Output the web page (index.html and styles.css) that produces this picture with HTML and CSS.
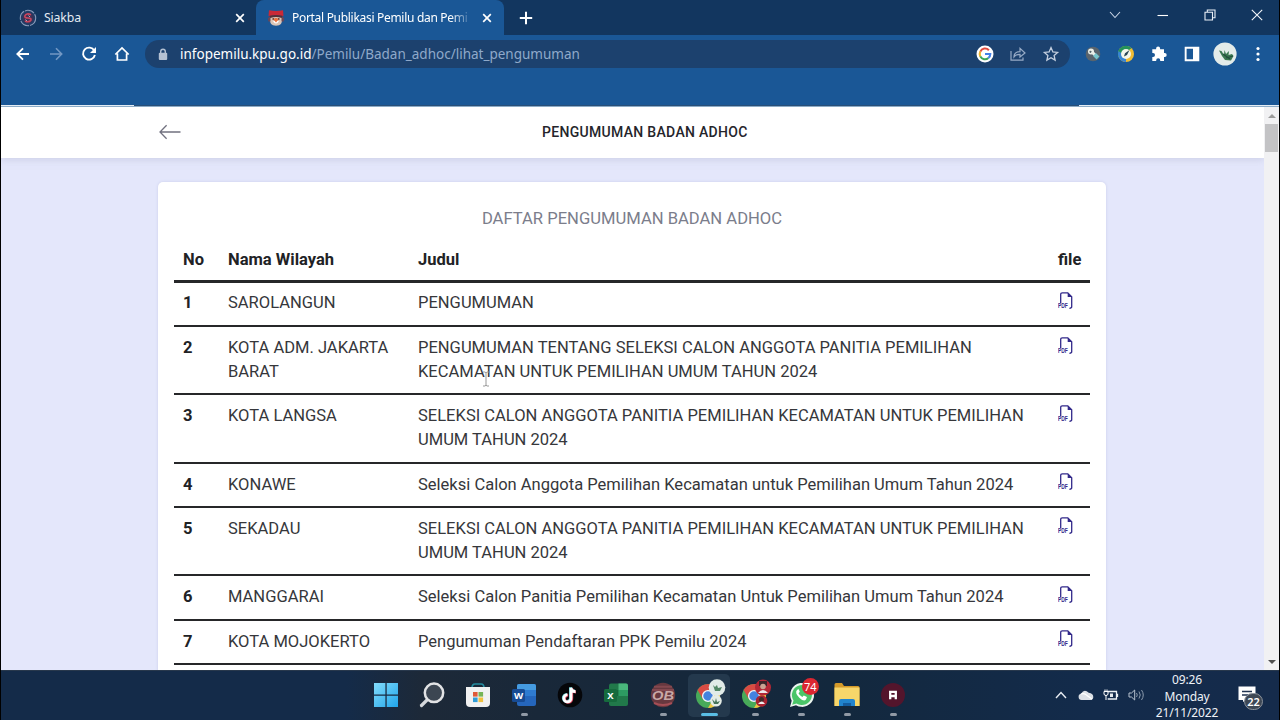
FILE: index.html
```html
<!DOCTYPE html>
<html lang="id">
<head>
<meta charset="utf-8">
<title>Portal Publikasi Pemilu dan Pemilihan</title>
<link rel="stylesheet" href="styles.css">
</head>
<body>
<svg width="0" height="0" class="defs">
  <symbol id="pdf" viewBox="0 0 15 18"><path d="M2.7 11V2.5Q2.7.9 4.3.9H9.8L13.7 4.8V14.8Q13.7 16.2 11.4 16.3" fill="none" stroke="#32298a" stroke-width="1.3"/><path d="M9.7.8V4.9H13.9Z" fill="#32298a"/><text x="0" y="16.4" textLength="9.8" lengthAdjust="spacingAndGlyphs">PDF</text></symbol>
  <symbol id="x" viewBox="0 0 10 10"><path d="M1.2 1.2 8.8 8.8M8.8 1.2 1.2 8.8" fill="none" stroke="#fff" stroke-width="1.7"/></symbol>
</svg>
<div class="screen">
  <header class="tabs">
    <div class="tab first">
      <svg class="fav" viewBox="0 0 18 18"><circle cx="9" cy="9" r="7.7" fill="#233b65" stroke="#8799b8" stroke-width="1.1" stroke-dasharray="10 1"/><circle cx="9" cy="9" r="5.2" fill="#3f3155"/><path d="M12 5.7Q7.5 3.5 5.8 7Q5.5 9 9 9T12 11Q10 14 6 12" fill="none" stroke="#c8465f" stroke-width="1.6"/><path d="M6.5 10.5 8 12M9.5 6.5 11 8" stroke="#9faac4" stroke-width="1"/></svg>
      <span class="title">Siakba</span><svg class="close"><use href="#x"/></svg>
    </div>
    <div class="tab active">
      <svg class="fav" viewBox="0 0 18 18"><path d="M2.5 8Q2 16.8 9 16.8T15.5 8Z" fill="#d9c5b8"/><path d="M.8 9.2 3.5 7V12.5H1.4ZM17.2 9.2 14.5 7V12.5H16.6Z" fill="#6c4655"/><path d="M2 1.3Q9 2.5 16 1.3L16.5 7.2Q9 5.6 1.5 7.2Z" fill="#ca2937"/><path d="M2.5 6.8Q9 5 15.5 6.8L14.7 9Q9 7 3.3 9Z" fill="#553039"/><circle cx="6.3" cy="10" r="1" fill="#6f3e32"/><circle cx="11.7" cy="10" r="1" fill="#6f3e32"/><path d="M6 12Q9 17 12 12Z" fill="#fff"/><path d="M6.5 10.5 9 13.5 11.5 10.5 10 9H8Z" fill="#ed713d"/></svg>
      <span class="title">Portal Publikasi Pemilu dan Pemi</span><svg class="close"><use href="#x"/></svg>
    </div>
    <svg class="plus" viewBox="0 0 14 14"><path d="M7 .8V13.2M.8 7H13.2" stroke="#fff" stroke-width="2"/></svg>
    <div class="window">
      <svg width="12" height="8" viewBox="0 0 12 8"><path d="M1 1 6 6.5 11 1" fill="none" stroke="#c9d6e7" stroke-width="1.1"/></svg>
      <svg width="12" height="12" viewBox="0 0 12 12"><path d="M.5 6.5H11" stroke="#fff" stroke-width="1.1"/></svg>
      <svg width="12" height="12" viewBox="0 0 12 12"><path d="M1 3.2H8.5V11H1ZM3.3 3V1H11V8.8H8.8" fill="none" stroke="#e8eef6" stroke-width="1.1"/></svg>
      <svg width="12" height="12" viewBox="0 0 12 12"><path d="M.8.8 11.2 11.2M11.2.8.8 11.2" stroke="#f4f7fb" stroke-width="1.1"/></svg>
    </div>
  </header>
  <div class="toolbar">
    <div class="nav">
      <svg width="16" height="16" viewBox="0 0 16 16"><path d="M14 8H2.5M8 2.3 2.3 8 8 13.7" fill="none" stroke="#fff" stroke-width="1.8"/></svg>
      <svg width="16" height="16" viewBox="0 0 16 16"><path d="M2 8H13.5M8 2.3 13.7 8 8 13.7" fill="none" stroke="#7398c4" stroke-width="1.6"/></svg>
      <svg width="16" height="16" viewBox="0 0 16 16"><path d="M13.3 4.7A6 6 0 1 0 13.9 9" fill="none" stroke="#fff" stroke-width="1.9"/><path d="M15 1V7H9Z" fill="#fff"/></svg>
      <svg width="16" height="16" viewBox="0 0 16 16"><path d="M1.3 8.5 8 2 14.7 8.5M3.4 7.5V14H12.6V7.5" fill="none" stroke="#fff" stroke-width="1.7"/></svg>
    </div>
    <div class="address">
      <svg class="lock" viewBox="0 0 10 13"><rect x=".8" y="4.8" width="8.4" height="7.2" rx="1" fill="#b4c1d3"/><path d="M2.7 5V3.5a2.3 2.3 0 0 1 4.6 0V5" fill="none" stroke="#b4c1d3" stroke-width="1.4"/></svg>
      <span class="url"><b>infopemilu.kpu.go.id</b>/Pemilu/Badan_adhoc/lihat_pengumuman</span>
      <svg width="18" height="18" viewBox="0 0 18 18"><circle cx="9" cy="9" r="8.5" fill="#fff"/><g fill="none" stroke-width="2.1"><path d="M4.3 6.6A5.2 5.2 0 0 1 12.9 5.2" stroke="#e34c3e"/><path d="M4.3 6.6A5.2 5.2 0 0 0 4.3 11.4" stroke="#f0b32c"/><path d="M4.3 11.4A5.2 5.2 0 0 0 12.4 13" stroke="#3da657"/><path d="M12.4 13Q14.3 11.3 14.3 9H9" stroke="#4481e8"/></g></svg>
      <svg width="18" height="18" viewBox="0 0 18 18"><path d="M2 6V15.2H14V12.5M5 12Q5 6.8 11 6.6V3.3L16 8 11 12V9.3Q7 9.2 5 12Z" fill="none" stroke="#97abc6" stroke-width="1.2"/></svg>
      <svg width="18" height="18" viewBox="0 0 18 18"><path d="M9 2.6 10.9 6.9 15.6 7.4 12.1 10.5 13.1 15.1 9 12.7 4.9 15.1 5.9 10.5 2.4 7.4 7.1 6.9Z" fill="none" stroke="#c4cfdf" stroke-width="1.3"/></svg>
    </div>
    <svg class="ext e1" viewBox="0 0 18 18"><circle cx="9" cy="9" r="7.3" fill="#59646d"/><circle cx="7" cy="6.6" r="3" fill="#e9eee8"/><circle cx="6.5" cy="6.8" r="1.1" fill="#52646a"/><path d="M8 7 11 10" stroke="#e9eee8" stroke-width="3"/><path d="M10.5 9.5 14 13" stroke="#76c6ce" stroke-width="4"/></svg>
    <svg class="ext e2" viewBox="0 0 18 18"><circle cx="9" cy="9" r="8" fill="#f1bd35"/><path d="M2 13A8 8 0 0 1 14.5 3.2L9 7Z" fill="#24925a"/><path d="M1.6 6A8 8 0 0 0 9 17V12Z" fill="#3884d5"/><circle cx="9" cy="9" r="5" fill="#f5f6ed"/><path d="M7 11.5 8 8.3 12.5 5 10 10Z" fill="#2a4556"/></svg>
    <svg class="ext e3" viewBox="0 0 18 18"><path d="M2.3 4.3H6.1V3.5a2 2 0 0 1 4 0V4.3H14V8.1H14.7a2 2 0 0 1 0 4H14V16H10.2V15.3a2 2 0 0 0-4 0V16H2.3V12.1H3a2 2 0 0 0 0-4H2.3Z" fill="#fff"/></svg>
    <svg class="ext e4" viewBox="0 0 18 18"><path fill-rule="evenodd" d="M1.7 1.7H16.3V16.3H1.7ZM3.6 3.7V14.3H10V3.7Z" fill="#fff"/></svg>
    <svg class="avatar" viewBox="0 0 24 24"><circle cx="12" cy="12" r="11.6" fill="#e3ebe9"/><path d="M6 8.5 8.5 9 11 13 11.5 8 13 12 16 9 15.5 13 19 12 20.5 14 18 18.5 12 18 9 14Z" fill="#3b7751"/><path d="M10 12 17 17M13 16 20 14" stroke="#234e3d" stroke-width="1.3"/></svg>
    <svg class="dots" viewBox="0 0 4 16"><g fill="#fff"><circle cx="2" cy="2.5" r="1.6"/><circle cx="2" cy="8" r="1.6"/><circle cx="2" cy="13.5" r="1.6"/></g></svg>
  </div>
  <div class="edge"><i></i><i></i></div>
  <main>
    <div class="page">
      <div class="pagehead"><svg class="back" viewBox="0 0 22 16"><path d="M21.5 8H1M7.6 1.3 1 8 7.6 14.7" fill="none" stroke="#71717f" stroke-width="1.3"/></svg><h1>PENGUMUMAN BADAN ADHOC</h1></div>
      <section class="card">
        <h2>DAFTAR PENGUMUMAN BADAN ADHOC</h2>
        <div class="row head"><b>No</b><b class="nw">Nama Wilayah</b><b>Judul</b><b>file</b></div>
        <div class="row"><b>1</b><span>SAROLANGUN</span><span>PENGUMUMAN</span><svg><use href="#pdf"/></svg></div>
        <div class="row two low"><b>2</b><span>KOTA ADM. JAKARTA<br>BARAT</span><span>PENGUMUMAN TENTANG SELEKSI CALON ANGGOTA PANITIA PEMILIHAN<br>KECAMATAN UNTUK PEMILIHAN UMUM TAHUN 2024</span><svg><use href="#pdf"/></svg></div>
        <div class="row two tall low"><b>3</b><span>KOTA LANGSA</span><span>SELEKSI CALON ANGGOTA PANITIA PEMILIHAN KECAMATAN UNTUK PEMILIHAN<br>UMUM TAHUN 2024</span><svg><use href="#pdf"/></svg></div>
        <div class="row low"><b>4</b><span>KONAWE</span><span>Seleksi Calon Anggota Pemilihan Kecamatan untuk Pemilihan Umum Tahun 2024</span><svg><use href="#pdf"/></svg></div>
        <div class="row two low"><b>5</b><span>SEKADAU</span><span>SELEKSI CALON ANGGOTA PANITIA PEMILIHAN KECAMATAN UNTUK PEMILIHAN<br>UMUM TAHUN 2024</span><svg><use href="#pdf"/></svg></div>
        <div class="row low"><b>6</b><span>MANGGARAI</span><span>Seleksi Calon Panitia Pemilihan Kecamatan Untuk Pemilihan Umum Tahun 2024</span><svg><use href="#pdf"/></svg></div>
        <div class="row low last"><b>7</b><span>KOTA MOJOKERTO</span><span>Pengumuman Pendaftaran PPK Pemilu 2024</span><svg><use href="#pdf"/></svg></div>
      </section>
    </div>
    <div class="scroll"><svg viewBox="0 0 10 6"><path d="M1 5 5 1 9 5Z" fill="#9b9b9b"/></svg><i></i><svg class="down" viewBox="0 0 10 6"><path d="M1 1 5 5 9 1Z" fill="#505050"/></svg></div>
    <svg class="cursor" viewBox="0 0 8 16"><path d="M1 1H3.2L4 2 4.8 1H7M4 2V14M1 15H3.2L4 14 4.8 15H7" fill="none" stroke="#999" stroke-width="1"/></svg>
  </main>
  <footer>
    <div class="apps">
      <div class="app"><svg viewBox="0 0 32 32"><defs><linearGradient id="w" x1="0" y1="0" x2="1" y2="1"><stop stop-color="#83dcfb"/><stop offset="1" stop-color="#20a5ea"/></linearGradient></defs><path d="M4 4H15.4V15.4H4ZM16.7 4H28V15.4H16.7ZM4 16.7H15.4V28H4ZM16.7 16.7H28V28H16.7Z" fill="url(#w)"/></svg></div>
      <div class="app"><svg viewBox="0 0 32 32"><path d="M12.5 19.5 5.5 26.5" stroke="#d5d8dc" stroke-width="3.2" stroke-linecap="round"/><circle cx="18" cy="13.8" r="9.2" fill="#3c4652" stroke="#e2e3e5" stroke-width="2.5"/></svg></div>
      <div class="app"><svg viewBox="0 0 32 32"><path d="M10 9Q10 5 13 5H19Q22 5 22 9" fill="none" stroke="#268da0" stroke-width="1.7"/><path d="M4 8H28V24Q28 28 24 28H8Q4 28 4 24Z" fill="#f1f1f1"/><path d="M11 13h4.6v4.6H11z" fill="#df5938"/><path d="M16.5 13h4.6v4.6h-4.6z" fill="#76b456"/><path d="M11 18.5h4.6v4.6H11z" fill="#309bd5"/><path d="M16.5 18.5h4.6v4.6h-4.6z" fill="#f0c13f"/></svg></div>
      <div class="app run"><svg viewBox="0 0 32 32"><rect x="9" y="5" width="19" height="22" rx="2" fill="#2566bc"/><path d="M9 11V7q0-2 2-2H26q2 0 2 2V11Z" fill="#459be0"/><path d="M9 11H28V17H9Z" fill="#2f7bd0"/><rect x="4" y="10" width="13" height="13" rx="1.5" fill="#174b94"/><text x="10.5" y="20.2" class="letter">W</text></svg></div>
      <div class="app"><svg viewBox="0 0 32 32"><circle cx="16" cy="16" r="12.3" fill="#050609"/><g fill="none" stroke-width="2.8"><path d="M16.4 8.2V18.5a3.6 3.6 0 1 1-3.6-3.2M16.4 8.2Q17 12 21 12" stroke="#58c9d1"/><path d="M17.8 9.2V19.3a3.6 3.6 0 1 1-3.6-3.2M17.8 9.2Q18 13 22 13" stroke="#df4860"/><path d="M17 8.7V18.9a3.6 3.6 0 1 1-3.6-3.2M17 8.7Q17.5 12.5 21.5 12.5" stroke="#fff"/></g></svg></div>
      <div class="app"><svg viewBox="0 0 32 32"><rect x="9" y="4.5" width="19" height="22.5" rx="2" fill="#21794a"/><path d="M18.5 4.5H26q2 0 2 2V11h-9.5Z" fill="#4ab67c"/><path d="M9 11h9.5v6H9Z" fill="#17663c"/><path d="M18.5 11H28v6h-9.5Z" fill="#2d9c62"/><rect x="4" y="10" width="13" height="13" rx="1.5" fill="#166b3d"/><text x="10.5" y="20.2" class="letter">X</text></svg></div>
      <div class="app run"><svg viewBox="0 0 32 32"><circle cx="16" cy="16" r="12.2" fill="#67383f"/><path d="M7 7.8H25M5 11H27" stroke="#84484f" stroke-width="2"/><text x="16" y="20.5" class="ob" textLength="22" lengthAdjust="spacingAndGlyphs">OB</text><path d="M7 24Q16 28 25 24" stroke="#a54e56" stroke-width="2" fill="none"/></svg></div>
      <div class="app run current"><svg viewBox="0 0 32 32"><circle cx="15" cy="17" r="12" fill="#48aa59"/><path d="M4.6 11A12 12 0 0 1 25.4 11H15L9.8 20Z" fill="#d94b43"/><path d="M15 29A12 12 0 0 0 25.4 11H15L20.2 20Z" fill="#efc541"/><circle cx="15" cy="17" r="5.4" fill="#4483df" stroke="#f5f6f8" stroke-width="1.3"/><circle cx="24" cy="8.6" r="8.3" fill="#e2ece8"/><path d="M20 6 22 8 24 6 25 9 29 8 27 12 22 12Z" fill="#548967"/><circle cx="23" cy="21.8" r="5.8" fill="#e4ece5"/><path d="M19 20 22 23 23 19 24 23 27 22 25 25 21 25Z" fill="#467359"/></svg></div>
      <div class="app run"><svg viewBox="0 0 32 32"><circle cx="15" cy="17" r="12" fill="#48aa59"/><path d="M4.6 11A12 12 0 0 1 25.4 11H15L9.8 20Z" fill="#d94b43"/><path d="M15 29A12 12 0 0 0 25.4 11H15L20.2 20Z" fill="#efc541"/><circle cx="15" cy="17" r="5.4" fill="#4483df" stroke="#f5f6f8" stroke-width="1.3"/><circle cx="24" cy="8.6" r="8" fill="#b32735"/><path d="M20 2h8v5h-8z" fill="#3b2428"/><circle cx="24" cy="7.5" r="2.8" fill="#c9a492"/><path d="M19 14Q24 8 29 14" fill="#efe9eb"/><circle cx="22.5" cy="22" r="5.8" fill="#a72332"/><circle cx="22.5" cy="20.5" r="2.5" fill="#422a29"/><path d="M19 25Q22.5 20 26 25" fill="#eee"/></svg></div>
      <div class="app run"><svg viewBox="0 0 32 32"><path d="M5 28 6.7 21.8A12 12 0 1 1 11 26.2Z" fill="#ecf4ef"/><path d="M7.2 25.8 8.5 21.5A10 10 0 1 1 11.5 24.5Z" fill="#4ac568"/><path d="M12 11Q9.5 14 14.3 18.7T21 20.5L22 18 18.8 16.5 17.3 18Q14.5 16.5 13.5 14.2L14.8 12.7 13.5 10Z" fill="#fff"/></svg><span class="count">74</span></div>
      <div class="app run"><svg viewBox="0 0 32 32"><path d="M3.5 5.5q0-1.5 1.5-1.5H11l2 3H27q1.5 0 1.5 1.5V27H3.5Z" fill="#d49a29"/><path d="M3.5 8.5H28.5V27H3.5Z" fill="#f7d66a"/><path d="M8 27V22q0-2 2-2H22q2 0 2 2V27Z" fill="#2184ce"/><path d="M12 24H20V27H12Z" fill="#145c9f"/></svg></div>
      <div class="app run"><svg viewBox="0 0 32 32"><circle cx="16" cy="16" r="12" fill="#53152c"/><path d="M13.2 20.2V12.8H18.8V20.2M13.2 17H18.8" fill="none" stroke="#fff" stroke-width="2.3"/></svg></div>
    </div>
    <div class="tray">
      <svg width="12" height="12" viewBox="0 0 12 12"><path d="M1 9 6 3.5 11 9" fill="none" stroke="#e8edf3" stroke-width="1.4"/></svg>
      <svg width="16" height="12" viewBox="0 0 16 12"><path d="M3.5 11A3.3 3.3 0 0 1 3.2 4.5Q6.3-.8 10.7 3.8 15.5 4.5 15.3 8.2 15 11 12.5 11Z" fill="#dce0e6"/><path d="M3 5Q7 4 9 6.5L14 10" stroke="#fff" fill="none" stroke-width="1.2"/></svg>
      <svg width="16" height="12" viewBox="0 0 16 12"><path d="M4.7 2.5H13.5V10H4.7M14.5 4.7V8" fill="none" stroke="#edf2f7" stroke-width="1.3"/><path d="M1 2.5H5V5Q4.8 6.5 3 6.5T1 5ZM2 .5V2.5M4 .5V2.5M3 6V11" fill="none" stroke="#fff" stroke-width="1"/><path d="M7 4.5h3V8H7z" fill="#e6ebf0"/></svg>
      <svg width="17" height="14" viewBox="0 0 17 14"><path d="M1 5H3.5L6.7 2V12L3.5 9H1Z" fill="none" stroke="#b7c2cf"/><path d="M8.5 5Q10 7 8.5 9M11 3.5Q13.5 7 11 10.5M13.5 2Q17 7 13.5 12" fill="none" stroke="#8d9cae"/></svg>
    </div>
    <div class="clock"><span>09:26</span><span>Monday</span><span>21/11/2022</span></div>
    <div class="notice"><svg viewBox="0 0 18 16"><path d="M.5.5H17.5V14H8L5 16V14H.5Z" fill="#fff"/><path d="M4 5.5H14M4 9H10" stroke="#213451" stroke-width="1.3"/></svg><span>22</span></div>
  </footer>
</div>
</body>
</html>
```
FILE: styles.css
```css
*{box-sizing:border-box}
body{margin:0;background:#000;overflow:hidden;font-family:"Noto Sans",sans-serif}
svg{display:block;flex:none;overflow:visible}
.defs{position:absolute}
.screen{width:1280px;height:720px;padding:0 1px;display:flex;flex-direction:column;overflow:hidden}
.tabs{height:35px;background:#12365f;display:flex;flex:none}
.tab{display:flex;align-items:center;font-size:12.3px;color:#fff;height:35px}
.first{width:255px;padding-left:18px;color:#e3eaf3}
.active{width:248px;background:#1a5796;border-radius:8px 8px 0 0;padding-left:11px}
.fav{width:18px;height:18px;margin-right:7px}
.title{flex:1;white-space:nowrap;line-height:20px}
.first .title{letter-spacing:-.15px}
.active .title{flex:none;width:180px;font-size:12px;letter-spacing:-.3px;-webkit-mask-image:linear-gradient(90deg,#000 88%,transparent);mask-image:linear-gradient(90deg,#000 88%,transparent)}
.close{width:10px;height:10px}
.first .close{margin-right:11px}
.active .close{margin-left:10px}
.plus{width:14px;height:14px;margin:10.5px 0 0 15px}
.window{margin-left:auto;display:flex;align-items:center;gap:35px;padding:0 16px 5px 0;height:35px}
.window svg:first-child{margin-right:1px}
.toolbar{height:70px;background:#1a5796;display:flex;align-items:flex-start;flex:none}
.nav{display:flex;gap:17px;padding:11px 0 0 14px;width:144px}
.address{width:925px;height:28px;margin-top:5px;border-radius:14px;background:#1c416e;display:flex;align-items:center;padding:0 10px 0 13px}
.lock{width:10px;height:13px;margin-right:12px}
.url{font-size:13.5px;line-height:20px;color:#8fa9ca;white-space:nowrap;margin-right:auto}
.url b{font-weight:400;color:#fff}
.address svg+svg{margin-left:15px}
.ext{width:18px;height:18px;margin-top:10px}
.e1{margin-left:14px}.e2,.e3,.e4{margin-left:15px}
.avatar{width:24px;height:24px;margin:7px 0 0 12px}
.dots{width:4px;height:16px;margin:11px 0 0 19px}
.edge{height:2px;background:#294f78;display:flex;justify-content:space-between;align-items:flex-start;flex:none;border-bottom:1px solid #8cabc7}
.edge i{width:133px;height:1px;background:#e4edf5}
.edge i:last-child{width:200px}
main{height:563px;flex:none;display:flex;background:#e4e7fb;position:relative;overflow:hidden;font-family:Roboto,sans-serif}
.page{width:1263px;flex:none}
.pagehead{height:51px;background:#fff;display:flex;align-items:center;padding:0 0 1px 158px;box-shadow:0 2px 7px #b9bdd888}
.back{width:22px;height:16px}
h1{font-size:14px;font-weight:500;letter-spacing:.31px;line-height:20px;margin:0 0 0 361px;color:#25252b;white-space:nowrap}
.card{width:948px;margin:24px 0 0 157px;height:520px;background:#fff;border-radius:5px 5px 0 0;padding:24px 16px 0;box-shadow:0 0 3px #c9cdea}
h2{font-size:16.6px;line-height:26px;font-weight:400;text-align:center;margin:0;color:#7b7d8b;white-space:nowrap}
.row{height:44px;border-bottom:2px solid #262729;display:grid;grid-template-columns:45px 190px 640px 1fr;padding:8px 0 0 9px;font-size:16.55px;line-height:24.4px;color:#36373b;white-space:nowrap}
.row b{color:#212225;font-weight:700}
.row.head{height:51px;border-bottom-width:3px;padding-top:16px}
.row.two{height:68px}.row.tall{height:69px}
.row:nth-child(8){height:45px}
.row.low{padding-top:9px}
.row svg{width:15px;height:18px;margin-top:1px}
.row.low svg{margin-top:0}
.row.low:nth-child(4) svg,.row.low:nth-child(5) svg,.row.low:nth-child(8) svg{margin-top:.6px}
symbol text{font:700 6.5px "Liberation Sans",sans-serif;fill:#32298a}
.scroll{width:15px;background:#f1f1f3;display:flex;flex-direction:column;align-items:center}
.scroll svg{width:10px;height:6px;margin-top:6px}
.scroll i{width:13px;height:28px;background:#c3c3c5;margin-top:5px}
.scroll .down{margin:auto 0 5px}
.cursor{position:absolute;width:8px;height:16px;left:481px;top:264px}
footer{height:50px;flex:none;background:linear-gradient(90deg,#142b49 0,#142b49 27%,#1d2938 33%,#192839 42%,#13283d 65%,#132b4b 85%,#152b4b);border-top:1px solid #28384c;display:flex}
.apps{display:flex;gap:4.1px;padding:3px 0 0 364px;width:1054px}
.app{width:42px;height:43px;display:flex;justify-content:center;padding-top:5px;position:relative;border-radius:5px;flex:none}
.app svg{width:32px;height:32px}
.app.run::after{content:"";position:absolute;left:18px;bottom:1px;width:7px;height:3px;border-radius:2px;background:#919aa6}
.app.current{background:#24394d}
.app.current::after{width:17px;left:13px;background:#5abee5}
.letter{font:700 9.5px "Noto Sans",sans-serif;text-anchor:middle;fill:#fff}
.ob{font:italic 700 13px "Liberation Sans",sans-serif;text-anchor:middle;fill:#c9a8a6}
.count{position:absolute;left:22px;top:4px;width:17px;height:17px;border-radius:50%;background:#db2631;color:#fff;font:11px/17px "Noto Sans",sans-serif;text-align:center}
.tray{display:flex;align-items:center;gap:9px;height:48px;width:92px}
.tray svg:nth-child(2){margin-left:2px}
.clock{width:80px;display:flex;flex-direction:column;align-items:center;padding-top:1px;color:#eef2f7;font-size:12px;line-height:16.6px;letter-spacing:-.15px}
.notice{position:relative;margin:15px 0 0 11px;width:30px}
.notice svg{width:18px;height:16px}
.notice span{position:absolute;left:6px;top:7px;width:19px;height:17px;border:1px solid #8b929c;border-radius:9px;background:#3e4855;color:#fff;font-size:11px;font-weight:600;line-height:15px;text-align:center}
```
